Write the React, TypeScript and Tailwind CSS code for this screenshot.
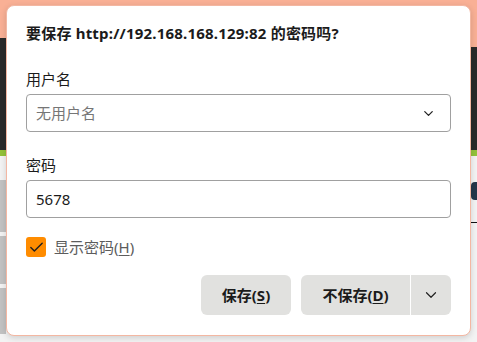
import { ChevronDown, Check } from "lucide-react";

const font = { fontFamily: '"Noto Sans", "Noto Sans CJK SC", sans-serif' };

function PageBehind() {
  return (
    <div className="flex h-[342px] w-[477px] flex-col overflow-hidden bg-[#f3f3f3]">
      <div className="h-[38px] shrink-0 bg-[#f9b095]" />
      <div className="flex h-[112px] shrink-0 flex-col bg-[#2a2a2a]">
        <div className="ml-auto h-[9px] w-[10px] bg-[#f9b095]" />
      </div>
      <div className="h-[6px] shrink-0 bg-[#93c23a]" />
      <div className="flex flex-1">
        <div className="flex w-[6px] flex-col gap-[4px] pt-[24px]">
          <div className="h-[52px] bg-[#c2c2c2]" />
          <div className="h-[48px] bg-[#c2c2c2]" />
          <div className="h-[46px] bg-[#c2c2c2]" />
        </div>
        <div className="flex-1" />
        <div className="flex w-[6px] flex-col pt-[26px]">
          <div className="h-[18px] rounded-l bg-[#24364a]" />
          <div className="mt-[22px] h-px bg-[#111]" />
        </div>
      </div>
    </div>
  );
}

export default function App() {
  return (
    <div className="relative h-[342px] w-[477px]" style={font}>
      <PageBehind />
      <div className="absolute left-[6px] top-[5px] flex h-[331px] w-[465px] flex-col rounded-lg border border-[#f3b7a2] bg-white px-[19px] pt-[17px] shadow-[0_2px_6px_rgba(0,0,0,0.15)]">
        <h1 className="text-[15px] font-bold leading-[20px] tracking-[0.2px] text-[#1b1b1b]">要保存 http://192.168.168.129:82 的密码吗?</h1>

        <label className="mt-[26px] text-[15px] leading-[20px] text-[#1b1b1b]">用户名</label>
        <div className="mt-[5px] flex h-[38px] items-center rounded border border-[#a0a0a0] pl-[9px] pr-[14px]">
          <span className="flex-1 text-[15px] text-[#767676]">无用户名</span>
          <ChevronDown className="h-[15px] w-[15px] text-[#222]" strokeWidth={2} />
        </div>

        <label className="mt-[23px] text-[15px] leading-[20px] text-[#1b1b1b]">密码</label>
        <div className="mt-[5px] flex h-[38px] items-center rounded border border-[#a0a0a0] pl-[9px]">
          <span className="text-[15px] text-[#1b1b1b]">5678</span>
        </div>

        <div className="mt-[19px] flex h-[20px] items-center gap-[8px]">
          <div className="flex h-[20px] w-[20px] items-center justify-center rounded-[3px] bg-[#ff8c00]">
            <Check className="h-[17px] w-[17px] text-[#1f1f1f]" strokeWidth={2} />
          </div>
          <span className="text-[15px] leading-[20px] text-[#5c5c5c]">
            显示密码(<span className="underline underline-offset-2">H</span>)
          </span>
        </div>

        <div className="mt-[18px] flex justify-end gap-[10px]">
          <button className="h-[40px] w-[90px] rounded-md bg-[#e1e1df] text-[15px] font-bold text-[#1b1b1b]">
            保存(<span className="underline underline-offset-2">S</span>)
          </button>
          <div className="flex h-[40px] overflow-hidden rounded-md bg-[#e1e1df]">
            <button className="w-[109px] text-[15px] font-bold text-[#1b1b1b]">
              不保存(<span className="underline underline-offset-2">D</span>)
            </button>
            <div className="w-px bg-white" />
            <button className="flex w-[40px] items-center justify-center">
              <ChevronDown className="h-[18px] w-[18px] text-[#222]" strokeWidth={1.6} />
            </button>
          </div>
        </div>
      </div>
    </div>
  );
}
